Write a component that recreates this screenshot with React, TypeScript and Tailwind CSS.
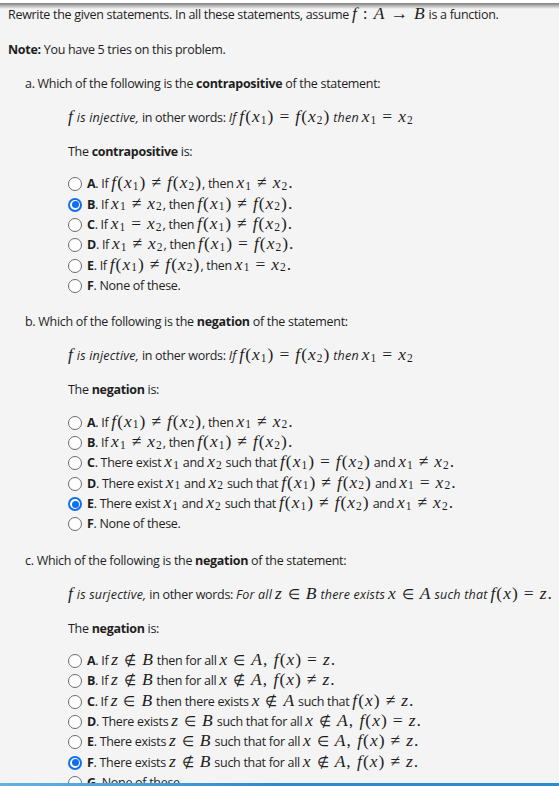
import React from 'react';

// math helpers, rendered roughly like KaTeX output
const M = ({ children }: { children: React.ReactNode }) => (
  <span className="font-['Liberation_Serif',serif] text-[17.5px] tracking-[1px] leading-none whitespace-nowrap">
    {children}
  </span>
);
const I = ({ children }: { children: React.ReactNode }) => <i>{children}</i>;
const Sub = ({ children }: { children: React.ReactNode }) => (
  <sub className="text-[11.5px] not-italic bottom-[-0.15em]">{children}</sub>
);
const R = ({ children }: { children: React.ReactNode }) => <span className="mx-[5px] not-italic">{children}</span>;
// set membership symbols come from a fallback font and render large, so shrink them
const In = ({ not }: { not?: boolean }) => (
  <span className="mx-[5px] not-italic text-[14px]">{not ? '∉' : '∈'}</span>
);
// italic words inside the statements
const Em = ({ children }: { children: React.ReactNode }) => <i className="tracking-[0.2px]">{children}</i>;

const x1 = <><I>x</I><Sub>1</Sub></>;
const x2 = <><I>x</I><Sub>2</Sub></>;
const fx1 = <><I>f</I>({x1})</>;
const fx2 = <><I>f</I>({x2})</>;
const fx = <><I>f</I>(<I>x</I>)</>;

interface Option {
  letter: string;
  body: React.ReactNode;
  checked?: boolean;
}

function Radio({ checked }: { checked?: boolean }) {
  if (checked) {
    return (
      <span className="w-[14px] h-[14px] rounded-full border-[2px] border-[#0f6ff0] bg-white flex items-center justify-center shrink-0">
        <span className="w-[7px] h-[7px] rounded-full bg-[#0f6ff0]" />
      </span>
    );
  }
  return <span className="w-[14px] h-[14px] rounded-full border border-[#6b6b6b] bg-white shrink-0" />;
}

function Options({ items }: { items: Option[] }) {
  return (
    <div className="mb-[16px]">
      {items.map((o) => (
        <div key={o.letter} className="flex items-center h-[20.4px] whitespace-nowrap">
          <Radio checked={o.checked} />
          <span className="ml-[5px]">
            <b>{o.letter}</b>. {o.body}
          </span>
        </div>
      ))}
    </div>
  );
}

function Section({
  label,
  word,
  statement,
  answer,
  items,
}: {
  label: string;
  word: string;
  statement: React.ReactNode;
  answer: string;
  items: Option[];
}) {
  return (
    <div className="pl-[25px]">
      <p className="mb-[14px]">
        {label}. Which of the following is the <b>{word}</b> of the statement:
      </p>
      <div className="pl-[43px]">
        <p className="mb-[14px] h-[20px] whitespace-nowrap">{statement}</p>
        <p className="mb-[12px]">
          The <b>{answer}</b> is:
        </p>
        <Options items={items} />
      </div>
    </div>
  );
}

const injective = (
  <>
    <M><I>f</I></M> <Em>is injective,</Em> in other words: <Em>If</Em> <M>{fx1}<R>=</R>{fx2}</M> <Em>then</Em>{' '}
    <M>{x1}<R>=</R>{x2}</M>
  </>
);

const surjective = (
  <>
    <M><I>f</I></M> <Em>is surjective,</Em> in other words: <Em>For all</Em> <M><I>z</I><In /><I>B</I></M>{' '}
    <Em>there exists</Em> <M><I>x</I><In /><I>A</I></M> <Em>such that</Em> <M>{fx}<R>=</R><I>z</I>.</M>
  </>
);

const partA: Option[] = [
  { letter: 'A', body: <>If <M>{fx1}<R>≠</R>{fx2}</M>, then <M>{x1}<R>≠</R>{x2}.</M></> },
  { letter: 'B', checked: true, body: <>If <M>{x1}<R>≠</R>{x2}</M>, then <M>{fx1}<R>≠</R>{fx2}.</M></> },
  { letter: 'C', body: <>If <M>{x1}<R>=</R>{x2}</M>, then <M>{fx1}<R>≠</R>{fx2}.</M></> },
  { letter: 'D', body: <>If <M>{x1}<R>≠</R>{x2}</M>, then <M>{fx1}<R>=</R>{fx2}.</M></> },
  { letter: 'E', body: <>If <M>{fx1}<R>≠</R>{fx2}</M>, then <M>{x1}<R>=</R>{x2}.</M></> },
  { letter: 'F', body: <>None of these.</> },
];

const partB: Option[] = [
  { letter: 'A', body: <>If <M>{fx1}<R>≠</R>{fx2}</M>, then <M>{x1}<R>≠</R>{x2}.</M></> },
  { letter: 'B', body: <>If <M>{x1}<R>≠</R>{x2}</M>, then <M>{fx1}<R>≠</R>{fx2}.</M></> },
  {
    letter: 'C',
    body: <>There exist <M>{x1}</M> and <M>{x2}</M> such that <M>{fx1}<R>=</R>{fx2}</M> and <M>{x1}<R>≠</R>{x2}.</M></>,
  },
  {
    letter: 'D',
    body: <>There exist <M>{x1}</M> and <M>{x2}</M> such that <M>{fx1}<R>≠</R>{fx2}</M> and <M>{x1}<R>=</R>{x2}.</M></>,
  },
  {
    letter: 'E',
    checked: true,
    body: <>There exist <M>{x1}</M> and <M>{x2}</M> such that <M>{fx1}<R>≠</R>{fx2}</M> and <M>{x1}<R>≠</R>{x2}.</M></>,
  },
  { letter: 'F', body: <>None of these.</> },
];

const partC: Option[] = [
  { letter: 'A', body: <>If <M><I>z</I><In not /><I>B</I></M> then for all <M><I>x</I><In /><I>A</I>, {fx}<R>=</R><I>z</I>.</M></> },
  { letter: 'B', body: <>If <M><I>z</I><In not /><I>B</I></M> then for all <M><I>x</I><In not /><I>A</I>, {fx}<R>≠</R><I>z</I>.</M></> },
  {
    letter: 'C',
    body: <>If <M><I>z</I><In /><I>B</I></M> then there exists <M><I>x</I><In not /><I>A</I></M> such that <M>{fx}<R>≠</R><I>z</I>.</M></>,
  },
  {
    letter: 'D',
    body: <>There exists <M><I>z</I><In /><I>B</I></M> such that for all <M><I>x</I><In not /><I>A</I>, {fx}<R>=</R><I>z</I>.</M></>,
  },
  {
    letter: 'E',
    body: <>There exists <M><I>z</I><In /><I>B</I></M> such that for all <M><I>x</I><In /><I>A</I>, {fx}<R>≠</R><I>z</I>.</M></>,
  },
  {
    letter: 'F',
    checked: true,
    body: <>There exists <M><I>z</I><In not /><I>B</I></M> such that for all <M><I>x</I><In not /><I>A</I>, {fx}<R>≠</R><I>z</I>.</M></>,
  },
  { letter: 'G', body: <>None of these.</> },
];

export default function App() {
  return (
    <div className="relative min-h-[786px] w-[559px] overflow-hidden bg-[#f4f4f4] text-[#1e1e1e] font-['Open_Sans',sans-serif] text-[12.5px] tracking-[-0.3px] leading-[20px]">
      {/* top strip + shadow from the tab bar above */}
      <div className="absolute top-0 left-0 right-0 h-[3px] bg-white" />
      <div className="absolute top-[3px] left-0 right-0 h-[6px] bg-gradient-to-b from-[#7d7d7d] to-[#f4f4f4]/0" />

      <div className="pt-[5px]">
        <p className="pl-[8px] mb-[15px] h-[20px] whitespace-nowrap">
          Rewrite the given statements. In all these statements, assume{' '}
          <M><I>f</I><R>:</R><I>A</I><R>→</R><I>B</I></M> is a function.
        </p>
        <p className="pl-[8px] mb-[14px]">
          <b>Note:</b> You have 5 tries on this problem.
        </p>

        <Section label="a" word="contrapositive" statement={injective} answer="contrapositive" items={partA} />
        <Section label="b" word="negation" statement={injective} answer="negation" items={partB} />
        <Section label="c" word="negation" statement={surjective} answer="negation" items={partC} />
      </div>

      {/* blue bar at the bottom edge of the window */}
      <div className="fixed bottom-0 left-0 right-0 h-[3px] bg-gradient-to-r from-[#64b2e2] via-[#2a8ccc] to-[#2a8ccc]" />
    </div>
  );
}
